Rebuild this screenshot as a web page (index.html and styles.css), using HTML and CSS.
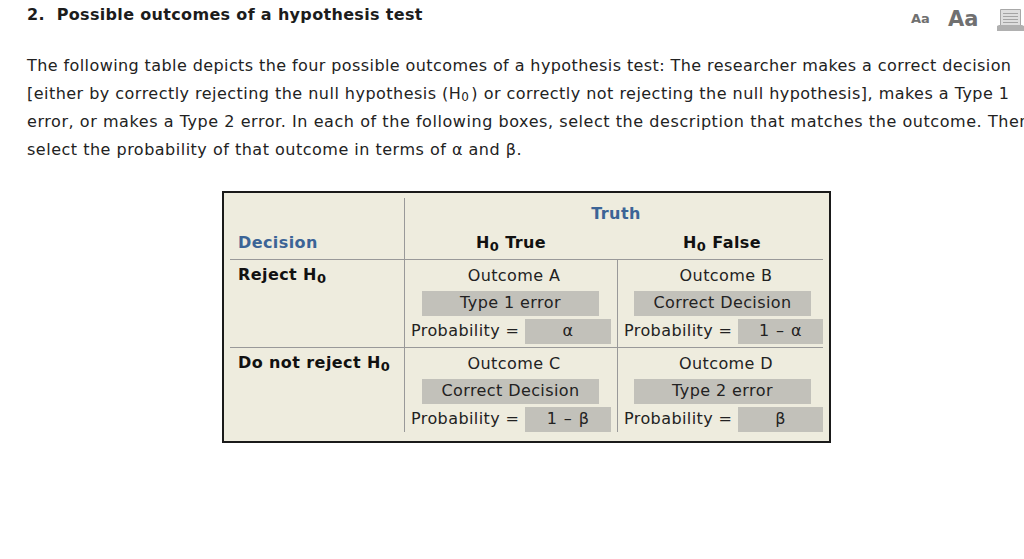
FILE: index.html
```html
<!DOCTYPE html>
<html lang="en">
<head>
<meta charset="utf-8">
<title>Possible outcomes of a hypothesis test</title>
<link rel="stylesheet" href="styles.css">
</head>
<body>
<header class="head">
  <h2 class="title">2.&nbsp; Possible outcomes of a hypothesis test</h2>
  <div class="tools">
    <span class="aa-small">Aa</span>
    <span class="aa-large">Aa</span>
    <svg class="printer" width="28" height="26" viewBox="0 0 28 26" aria-hidden="true">
      <path d="M4.500 4.500h20v16h-20z" fill="#dedede" stroke="#a8a8a8"/>
      <path d="M7 8.500h15M7 11.500h15M7 14.500h15M7 17.500h15" stroke="#a4a4a4" fill="none"/>
      <path d="M3 20h23l2 1v5H1v-5z" fill="#b0b0b0"/>
    </svg>
  </div>
</header>
<p class="intro"><span class="l1">The following table depicts the four possible outcomes of a hypothesis test: The researcher makes a correct decision</span><br><span class="l2">[either by correctly rejecting the null hypothesis (H<sub>0</sub>) or correctly not rejecting the null hypothesis], makes a Type 1</span><br><span class="l3">error, or makes a Type 2 error. In each of the following boxes, select the description that matches the outcome. Then</span><br><span class="l4">select the probability of that outcome in terms of α and β.</span></p>
<section class="box">
  <div class="grid">
    <div class="c-decision-top"></div>
    <div class="c-truth">Truth</div>
    <div class="c-decision">Decision</div>
    <div class="c-h">H<sub>0</sub> True</div>
    <div class="c-h c-h-false">H<sub>0</sub> False</div>

    <div class="c-row">Reject H<sub>0</sub></div>
    <div class="c-out">
      <div class="o-name">Outcome A</div>
      <div class="answer wide">Type 1 error</div>
      <div class="prob"><span>Probability =</span><span class="answer val">α</span></div>
    </div>
    <div class="c-out split">
      <div class="o-name">Outcome B</div>
      <div class="answer wide">Correct Decision</div>
      <div class="prob"><span>Probability =</span><span class="answer val">1 – α</span></div>
    </div>

    <div class="c-row rule">Do not reject H<sub>0</sub></div>
    <div class="c-out rule">
      <div class="o-name">Outcome C</div>
      <div class="answer wide">Correct Decision</div>
      <div class="prob"><span>Probability =</span><span class="answer val">1 – β</span></div>
    </div>
    <div class="c-out split rule">
      <div class="o-name">Outcome D</div>
      <div class="answer wide">Type 2 error</div>
      <div class="prob"><span>Probability =</span><span class="answer val">β</span></div>
    </div>
  </div>
</section>
</body>
</html>
```
FILE: styles.css
```css
* { box-sizing: border-box; }
html, body { margin: 0; height: 559px; overflow: hidden; background: #fff; }
body {
  width: 1024px;
  font-family: "DejaVu Sans", Verdana, sans-serif;
  font-size: 16px;
  letter-spacing: 0.41px;
  color: #222;
}
sub { font-size: 13px; line-height: 0; vertical-align: -3px; font-weight: inherit; }

.head { display: flex; justify-content: space-between; height: 30px; padding: 5px 0 0 27px; }
.title { margin: 0; font-size: 16px; font-weight: bold; line-height: 20px; color: #1c1c1c; letter-spacing: 0.33px; }
.tools { display: flex; align-items: flex-start; font-weight: bold; color: #707070; letter-spacing: 0; }
.aa-small { font-size: 13px; margin-top: 6px; width: 37px; }
.aa-large { font-size: 21px; margin-top: 2px; width: 48px; }
.printer { margin-top: 0; }

.intro { margin: 22px 0 0 27px; width: 1040px; line-height: 28px; white-space: nowrap; }
.intro sub { font-size: 12px; vertical-align: -2px; margin-right: 2px; }
.l2 { letter-spacing: 0.47px; }
.l3 { letter-spacing: 0.56px; }
.l4 { letter-spacing: 0.5px; }

.box {
  margin: 27px 0 0 222px;
  width: 609px;
  height: 252px;
  border: 2px solid #1a1a1a;
  background: #eeecde;
  padding: 5px 6px 0 6px;
}
.grid {
  display: grid;
  grid-template-columns: 175px 212px 206px;
  grid-template-rows: 28px 34px 87px 85px;
}
.c-decision-top { border-right: 1px solid #999; }
.c-truth { grid-column: 2 / 4; text-align: center; color: #3c6496; font-weight: bold; line-height: 31px; padding-left: 4px; }
.c-decision { color: #3c6496; font-weight: bold; padding-left: 8px; line-height: 33px; border-right: 1px solid #999; border-bottom: 1px solid #999; }
.c-h { text-align: center; font-weight: bold; line-height: 33px; color: #111; border-bottom: 1px solid #999; }
.c-h-false { padding-left: 4px; }
.c-row { font-weight: bold; color: #111; padding: 0 0 0 8px; line-height: 30px; border-right: 1px solid #999; }
.c-out { padding: 0 0 0 6px; }
.split { border-left: 1px solid #999; padding-left: 6px; }
.rule { border-top: 1px solid #999; }
.o-name { text-align: center; line-height: 31px; height: 31px; }
.split .o-name { padding-left: 5px; }
.answer { background: #c2c1ba; text-align: center; color: #222; }
.wide { width: 177px; height: 25px; line-height: 24px; margin: 0 0 3px 11px; }
.split .wide { margin-left: 10px; }
.prob { display: flex; justify-content: space-between; align-items: flex-start; height: 25px; line-height: 24px; padding-right: 6px; }
.split .prob { padding-right: 0; }
.val { width: 86px; height: 25px; word-spacing: 1px; }
.split .val { width: 85px; }
```
